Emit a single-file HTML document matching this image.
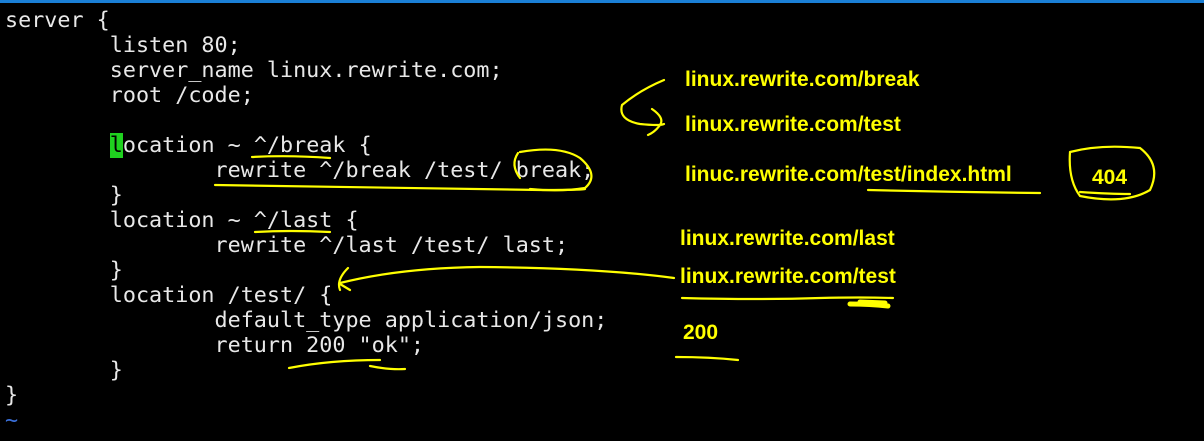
<!DOCTYPE html>
<html><head><meta charset="utf-8"><style>
html,body{margin:0;padding:0;background:#000;width:1204px;height:441px;overflow:hidden;position:relative}
.bar{position:absolute;left:0;top:0;width:1204px;height:3px;background:#1a7fd6}
pre{position:absolute;left:5px;top:8px;margin:0;font-family:"DejaVu Sans Mono","Liberation Mono",monospace;font-size:21.75px;line-height:25px;color:#e8e8e8}
.cur{background:#1fd11f;color:#000}
.t{position:absolute;color:#ffff00;font-family:"Liberation Sans",Arial,sans-serif;font-weight:bold;font-size:21px;line-height:22px;white-space:nowrap}
svg{position:absolute;left:0;top:0}
</style></head><body>
<div class="bar"></div>
<pre>server {
        listen 80;
        server_name linux.rewrite.com;
        root /code;

        <span class="cur">l</span>ocation ~ ^/break {
                rewrite ^/break /test/ break;
        }
        location ~ ^/last {
                rewrite ^/last /test/ last;
        }
        location /test/ {
                default_type application/json;
                return 200 "ok";
        }
}
<span style="color:#3a6fd8">~</span></pre>
<div class="t" style="left:685px;top:69px">linux.rewrite.com/break</div>
<div class="t" style="left:685px;top:114px">linux.rewrite.com/test</div>
<div class="t" style="left:685px;top:164px">linuc.rewrite.com/test/index.html</div>
<div class="t" style="left:1092px;top:167px">404</div>
<div class="t" style="left:680px;top:228px">linux.rewrite.com/last</div>
<div class="t" style="left:680px;top:266px">linux.rewrite.com/test</div>
<div class="t" style="left:683px;top:322px">200</div>
<svg width="1204" height="441" fill="none" stroke="#ffff00" stroke-width="2.2" stroke-linecap="round">
<path d="M252 157 Q290 155 330 158"/>
<path d="M215 185 Q400 188 540 190 Q580 190 585 189"/>
<path d="M518 153 Q510 165 520 178 M520 152 Q560 145 580 158 Q600 175 585 188 Q560 192 530 189"/>
<path d="M255 232 Q290 230 330 232"/>
<path d="M289 368 Q330 360 380 360 M370 366 Q390 370 405 369"/>
<path d="M664 80 Q640 90 622 105 Q618 120 640 124 Q660 126 664 124 M652 109 Q665 118 660 125 Q655 132 648 135"/>
<path d="M868 190 Q950 192 1040 193"/>
<path d="M1070 152 Q1100 144 1140 148 Q1162 165 1150 190 Q1125 205 1080 196 Q1068 180 1070 152 M1080 192 Q1110 194 1130 194"/>
<path d="M674 278 Q600 268 480 267 Q400 268 340 283 M348 268 Q336 280 340 290 M340 284 Q345 287 350 290"/>
<path d="M682 298 Q760 300 820 298 Q860 297 893 298"/>
<path d="M850 304 Q870 304 888 306 M860 302 L885 303" stroke-width="5"/>
<path d="M676 357 Q710 357 738 360"/>
</svg>
</body></html>
